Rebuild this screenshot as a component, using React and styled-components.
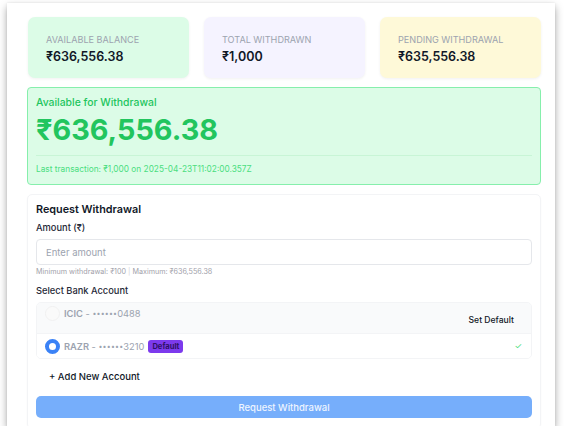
import React from 'react';
import styled, { createGlobalStyle } from 'styled-components';

const GlobalStyle = createGlobalStyle`
  body {
    margin: 0;
    background: #ffffff;
    font-family: 'Inter', 'Liberation Sans', sans-serif;
  }
  * { box-sizing: border-box; }
`;

// ---- Frame ----
const Frame = styled.div`
  margin: 3px 0 0 7px;
  width: 548px;
  height: 423px;
  background: #ffffff;
  box-shadow: 0 4px 8px rgba(0, 0, 0, 0.35), 0 0 2px rgba(0, 0, 0, 0.08);
  overflow: hidden;
  padding: 14px 14px 0 20px;
`;

const StatGrid = styled.div`
  display: grid;
  grid-template-columns: repeat(3, 1fr);
  gap: 15px;
  padding: 0 0 0 1px;
`;

const StatCard = styled.div`
  height: 61px;
  border-radius: 7px;
  background: ${({ $bg }) => $bg};
  box-shadow: 0 1px 3px rgba(0, 0, 0, 0.06);
  padding: 17px 18px 0;
`;

const StatLabel = styled.div`
  font-size: 9.1px;
  color: #9ca3af;
  text-transform: uppercase;
  line-height: 12px;
`;

const StatValue = styled.div`
  margin-top: 3px;
  font-size: 12.5px;
  font-weight: 600;
  color: #111827;
  line-height: 16px;
`;

// ---- Available box ----
const AvailableBox = styled.div`
  margin-top: 9px;
  height: 98px;
  border: 1px solid #86efac;
  border-radius: 4px;
  background: #dcfce7;
  padding: 8px 8px 0;
`;

const AvailableLabel = styled.div`
  font-size: 10.4px;
  font-weight: 500;
  color: #22c55e;
  line-height: 14px;
`;

const AvailableAmount = styled.div`
  margin-top: 2px;
  font-size: 28.8px;
  font-weight: 700;
  color: #22c55e;
  line-height: 36px;
`;

const Divider = styled.div`
  margin-top: 7px;
  border-top: 1px solid #c8f5d6;
`;

const LastTx = styled.div`
  margin-top: 7px;
  font-size: 8.3px;
  color: #4ade80;
  line-height: 12px;
`;

// ---- Form card ----
const FormCard = styled.div`
  margin-top: 9px;
  border: 1px solid #f3f4f6;
  border-radius: 5px;
  padding: 8px 8px 10px;
  box-shadow: 0 1px 2px rgba(0, 0, 0, 0.03);
`;

const FormTitle = styled.div`
  font-size: 10.8px;
  font-weight: 600;
  color: #111827;
  line-height: 14px;
`;

const FieldLabel = styled.div`
  margin-top: ${({ $mt }) => $mt || '5px'};
  font-size: 9.3px;
  font-weight: 500;
  color: #1f2937;
  line-height: 12px;
`;

const AmountInput = styled.input`
  display: block;
  margin-top: 5px;
  width: 100%;
  height: 26px;
  border: 1px solid #e5e7eb;
  border-radius: 4px;
  padding: 0 9px;
  font-family: inherit;
  font-size: 9.5px;
  color: #111827;
  outline: none;
  &::placeholder { color: #9ca3af; }
`;

const Helper = styled.div`
  margin-top: 2px;
  font-size: 7.2px;
  color: #a1a1aa;
  line-height: 10px;
  span { color: #d4d4d8; margin: 0 2px; }
`;

const BankList = styled.div`
  margin-top: 5px;
  border: 1px solid #f3f4f6;
  border-radius: 5px;
  overflow: hidden;
`;

const BankRow = styled.div`
  display: flex;
  align-items: ${({ $top }) => ($top ? 'flex-start' : 'center')};
  height: ${({ $h }) => $h};
  padding: ${({ $top }) => ($top ? '3px 8px 0 8px' : '0 8px 0 8px')};
  background: ${({ $bg }) => $bg || '#ffffff'};
  border-bottom: ${({ $last }) => ($last ? 'none' : '1px solid #f3f4f6')};
`;

const Radio = styled.div`
  width: 15px;
  height: 15px;
  border-radius: 50%;
  flex-shrink: 0;
  border: ${({ $on }) => ($on ? '4px solid #3b82f6' : '1px solid #f0f0f0')};
  background: ${({ $on }) => ($on ? '#ffffff' : '#fafafa')};
`;

const BankText = styled.div`
  margin-left: 4px;
  font-size: 9.3px;
  color: #9ca3af;
  line-height: 15px;
  b { font-weight: 600; }
`;

const Dots = styled.span`
  font-size: 7px;
  letter-spacing: 0.2px;
  vertical-align: 1px;
`;

const Badge = styled.span`
  margin-left: 4px;
  background: #7c3aed;
  color: #2e1065;
  font-size: 7.6px;
  font-weight: 700;
  border-radius: 3px;
  padding: 2px 4px;
  line-height: 9px;
`;

const RowAction = styled.div`
  margin-left: auto;
  align-self: center;
  font-size: 8.6px;
  font-weight: 500;
  color: #111827;
  padding-right: 9px;
`;

const Check = styled.div`
  margin-left: auto;
  padding-right: 1px;
  font-size: 8.5px;
  color: #4ade80;
`;

const AddAccount = styled.div`
  margin-top: 12px;
  padding-left: 13px;
  font-size: 9.5px;
  font-weight: 500;
  color: #111827;
  line-height: 12px;
`;

const SubmitButton = styled.button`
  display: block;
  margin-top: 13px;
  width: 100%;
  height: 22px;
  border: none;
  border-radius: 5px;
  background: #76aefb;
  color: #eef5ff;
  font-family: inherit;
  font-size: 9.5px;
  font-weight: 500;
`;

// ---- Data ----
const STATS = [
  { label: 'Available Balance', value: '₹636,556.38', bg: '#dcfce7' },
  { label: 'Total Withdrawn', value: '₹1,000', bg: '#f5f3ff' },
  { label: 'Pending Withdrawal', value: '₹635,556.38', bg: '#fef9d8' },
];

export default function App() {
  return (
    <>
      <GlobalStyle />
      <Frame>
        <StatGrid>
          {STATS.map((s) => (
            <StatCard key={s.label} $bg={s.bg}>
              <StatLabel>{s.label}</StatLabel>
              <StatValue>{s.value}</StatValue>
            </StatCard>
          ))}
        </StatGrid>

        <AvailableBox>
          <AvailableLabel>Available for Withdrawal</AvailableLabel>
          <AvailableAmount>₹636,556.38</AvailableAmount>
          <Divider />
          <LastTx>Last transaction: ₹1,000 on 2025-04-23T11:02:00.357Z</LastTx>
        </AvailableBox>

        <FormCard>
          <FormTitle>Request Withdrawal</FormTitle>
          <FieldLabel>Amount (₹)</FieldLabel>
          <AmountInput placeholder="Enter amount" />
          <Helper>
            Minimum withdrawal: ₹100<span>|</span>Maximum: ₹636,556.38
          </Helper>
          <FieldLabel $mt="8px">Select Bank Account</FieldLabel>
          <BankList>
            <BankRow $top $h="31px" $bg="#f9fafb">
              <Radio />
              <BankText><b>ICIC</b> - <Dots>••••••</Dots>0488</BankText>
              <RowAction>Set Default</RowAction>
            </BankRow>
            <BankRow $h="24px" $last>
              <Radio $on />
              <BankText><b>RAZR</b> - <Dots>••••••</Dots>3210</BankText>
              <Badge>Default</Badge>
              <Check>✓</Check>
            </BankRow>
          </BankList>
          <AddAccount>+ Add New Account</AddAccount>
          <SubmitButton>Request Withdrawal</SubmitButton>
        </FormCard>
      </Frame>
    </>
  );
}
